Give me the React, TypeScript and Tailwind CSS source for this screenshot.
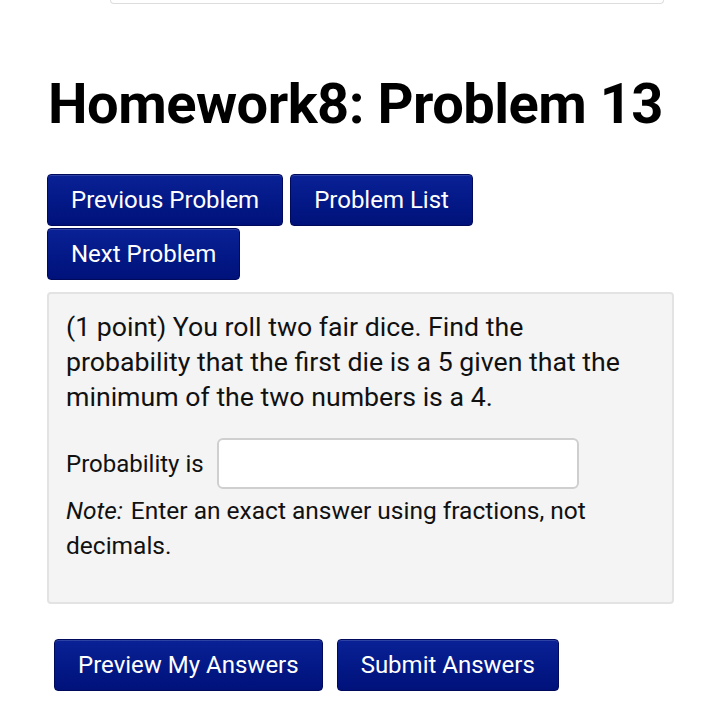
const btn =
  'rounded-[4px] border border-[#000a5c] bg-gradient-to-b from-[#0a2196] to-[#00117a] text-white text-[24px] leading-none px-[23px] h-[52px] shadow-[inset_0_1px_0_rgba(255,255,255,0.15)]';

export default function App() {
  return (
    <div className="w-[720px] h-[704px] bg-white overflow-hidden text-[#111] font-['Roboto',sans-serif]">
      {/* cut-off box at top */}
      <div className="ml-[110px] w-[554px] h-[4px] border border-t-0 border-[#ddd] rounded-b-[4px]" />

      <h1 className="mt-[72px] ml-[48px] text-[56px] font-bold leading-none tracking-[-0.5px] text-black">
        Homework8: Problem 13
      </h1>

      <div className="mt-[42px] ml-[47px] flex flex-col gap-[2px]">
        <div className="flex gap-[7px]">
          <button className={btn}>Previous Problem</button>
          <button className={btn}>Problem List</button>
        </div>
        <div className="flex">
          <button className={btn}>Next Problem</button>
        </div>
      </div>

      <div className="mt-[12px] ml-[47px] w-[627px] h-[312px] bg-[#f4f4f4] border-2 border-[#e3e3e3] rounded-[4px] pl-[17px] pr-[36px] pt-[16px]">
        <p className="text-[26.7px] leading-[35px]">
          (1 point) You roll two fair dice. Find the probability that the first die is a 5 given that the
          minimum of the two numbers is a 4.
        </p>
        <div className="mt-[23px] flex items-center gap-[13px]">
          <span className="text-[24px]">Probability is</span>
          <input
            type="text"
            className="w-[362px] h-[51px] bg-white border-2 border-[#cfcfcf] rounded-[6px] outline-none"
          />
        </div>
        <p className="mt-[4px] text-[24.5px] leading-[35px]">
          <em className="pr-[2px]">Note:</em> Enter an exact answer using fractions, not decimals.
        </p>
      </div>

      <div className="mt-[35px] ml-[54px] flex gap-[14px]">
        <button className={btn}>Preview My Answers</button>
        <button className={btn}>Submit Answers</button>
      </div>
    </div>
  );
}
